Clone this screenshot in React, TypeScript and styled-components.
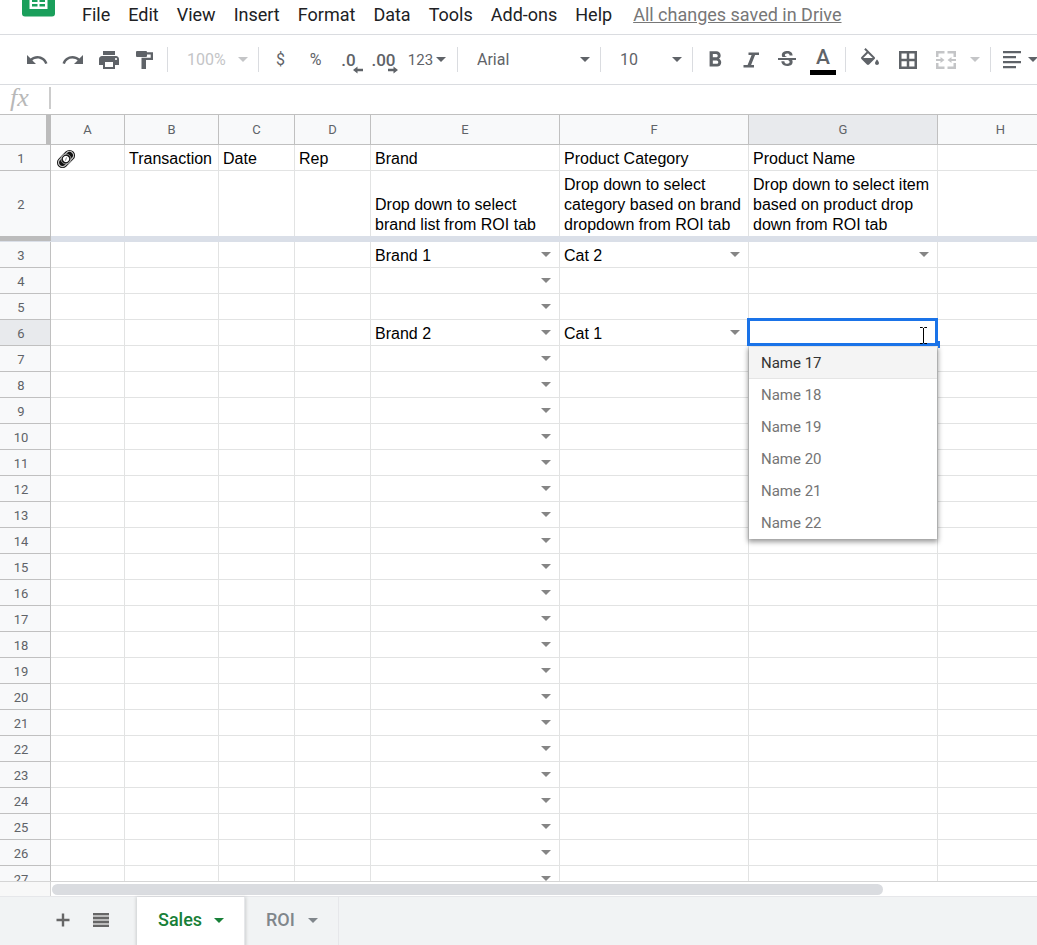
import React from 'react';
import styled, { createGlobalStyle, css } from 'styled-components';
import {
  MdUndo,
  MdRedo,
  MdPrint,
  MdFormatBold,
  MdStrikethroughS,
} from 'react-icons/md';

const GlobalStyle = createGlobalStyle`
  *, *::before, *::after { box-sizing: border-box; }
  body {
    margin: 0;
    background: #fff;
    font-family: Roboto, "Liberation Sans", sans-serif;
  }
  button, input, select {
    margin: 0;
    padding: 0;
    border: 0;
    outline: 0;
    background: transparent;
    color: inherit;
    font: inherit;
  }
  svg { display: block; flex: none; }
`;

const Page = styled.div`
  display: flex;
  flex-direction: column;
  height: 100vh;
  overflow: hidden;
`;

/* ---------- menu bar ---------- */

const MenuBar = styled.header`
  display: flex;
  flex: none;
  height: 35px;
  padding-left: 22px;
  border-bottom: 1px solid #dadce0;
  white-space: nowrap;
`;

const Logo = styled.div`
  width: 33px;
  height: 17px;
  margin-right: 18px;
`;

const Menus = styled.nav`
  display: flex;
  height: 30px;
  align-items: center;
  font-size: 18px;
  line-height: 24px;
  color: #202124;
`;

const MenuButton = styled.button`
  padding: 0 9px;
`;

const SavedLink = styled.a`
  margin-left: 12px;
  color: #777;
  text-decoration: underline;
`;

/* ---------- toolbar ---------- */

const Toolbar = styled.div`
  display: flex;
  flex: none;
  align-items: center;
  height: 50px;
  padding-left: 19px;
  border-bottom: 1px solid #dadce0;
  color: #5f6368;
  font-size: 16px;
  overflow: hidden;
`;

const Group = styled.div<{ $gap?: number }>`
  display: flex;
  flex: none;
  align-items: center;
  gap: ${(p) => p.$gap ?? 0}px;
  padding: 0 ${(p) => p.$gap ?? 0}px;
`;

const Separator = styled.span`
  flex: none;
  width: 1px;
  height: 25px;
  margin: 0 4px;
  background: #dadce0;
`;

const ToolButton = styled.button<{ $width?: number; $disabled?: boolean }>`
  display: flex;
  flex: none;
  align-items: center;
  justify-content: center;
  width: ${(p) => p.$width ?? 36}px;
  height: 36px;
  color: ${(p) => (p.$disabled ? '#c4c5c7' : 'inherit')};
`;

const DecimalButton = styled(ToolButton)`
  position: relative;
  padding-right: 4px;
  font-size: 17px;
  font-weight: 500;
  svg {
    position: absolute;
    right: 5px;
    bottom: 4px;
  }
`;

const FormatButton = styled(ToolButton)`
  gap: 3px;
  padding-right: 2px;
  font-size: 15px;
`;

const ColorButton = styled(ToolButton)`
  span {
    width: 26px;
    height: 29px;
    border-bottom: 5px solid #000;
    margin-top: 2px;
    font-size: 21px;
    font-weight: 500;
    line-height: 22px;
  }
`;

const AlignButton = styled(ToolButton)`
  gap: 4px;
`;

const Picker = styled.label<{ $width: number; $muted?: boolean }>`
  display: flex;
  flex: none;
  align-items: center;
  width: ${(p) => p.$width}px;
  height: 36px;
  padding: 0 6px 0 15px;
  color: ${(p) => (p.$muted ? '#c4c5c7' : 'inherit')};
  select {
    flex: 1;
    min-width: 0;
    appearance: none;
  }
`;

/* ---------- formula bar ---------- */

const FormulaBar = styled.label`
  display: flex;
  flex: none;
  align-items: center;
  height: 30px;
  padding: 0 0 3px 10px;
  border-bottom: 1px solid #c0c0c0;
  span {
    width: 39px;
    color: #b8b8b8;
    font: italic 26px/26px "Liberation Serif", serif;
  }
  input {
    flex: 1;
    height: 22px;
    padding: 0 8px;
    border-left: 2px solid #ccc;
    font-size: 16px;
  }
`;

/* ---------- sheet ---------- */

const SheetArea = styled.main`
  flex: 1;
  min-height: 0;
  overflow: hidden;
`;

const Grid = styled.table`
  width: 1064px;
  table-layout: fixed;
  border-collapse: separate;
  border-spacing: 0;
`;

const headCell = css<{ $active?: boolean }>`
  padding: 0;
  border: solid #c0c0c0;
  border-width: 0 1px 1px 0;
  background: ${(p) => (p.$active ? '#e8eaed' : '#f8f9fa')};
  color: #5f6368;
  font-size: 13px;
  font-weight: 400;
  line-height: 16px;
  text-align: center;
`;

const ColumnHead = styled.th<{ $active?: boolean }>`
  ${headCell}
  height: 30px;
`;

const Corner = styled.td`
  ${headCell}
  border-right: 5px solid #bcbcbc;
`;

const RowHead = styled.th<{ $active?: boolean; $frozenEdge?: boolean }>`
  ${headCell}
  padding: 2px 8px 0 0;
  border-bottom-width: ${(p) => (p.$frozenEdge ? 0 : 1)}px;
`;

const Row = styled.tr<{ $height?: number }>`
  height: ${(p) => p.$height ?? 26}px;
`;

const Cell = styled.td<{ $frozenEdge?: boolean }>`
  position: relative;
  padding: 0 0 1px 4px;
  border: solid #e2e3e3;
  border-width: 0 1px ${(p) => (p.$frozenEdge ? 0 : 1)}px 0;
  vertical-align: bottom;
  font: 16px/20px "Liberation Sans", Arial, sans-serif;
  color: #000;
`;

const CellBody = styled.div`
  display: flex;
  align-items: center;
  justify-content: space-between;
  height: 20px;
`;

const CellToggle = styled.button`
  display: flex;
  align-items: center;
  height: 16px;
  margin-bottom: 4px;
  padding: 0 8px;
  color: #858585;
`;

const FreezeHead = styled.td`
  height: 6px;
  padding: 0;
  border-bottom: 1px solid #dadfe8;
  background: #bcbcbc;
`;

const FreezeBar = styled.td`
  height: 6px;
  padding: 0;
  background: #dadfe8;
`;

const Selection = styled.div`
  position: absolute;
  z-index: 2;
  inset: -2px -1px -1px -2px;
  border: 3px solid #1a73e8;
  background: #fff;
  &::after {
    content: "";
    position: absolute;
    right: -5px;
    bottom: -5px;
    width: 2px;
    height: 7px;
    background: #1a73e8;
  }
`;

const CellInput = styled.input`
  display: block;
  width: 100%;
  height: 100%;
`;

const PointerMark = styled.svg`
  position: absolute;
  top: 6px;
  right: 7px;
`;

const Options = styled.ul`
  position: absolute;
  z-index: 1;
  top: 27px;
  left: 0;
  right: 0;
  margin: 0;
  padding: 0;
  list-style: none;
  background: #fff;
  box-shadow: 0 2px 5px 1px rgba(0, 0, 0, 0.4);
`;

const Option = styled.li<{ $active?: boolean }>`
  height: 32px;
  padding-left: 12px;
  border-bottom: 1px solid ${(p) => (p.$active ? '#e5e5e5' : 'transparent')};
  background: ${(p) => (p.$active ? '#f4f4f4' : '#fff')};
  color: ${(p) => (p.$active ? '#333' : '#757575')};
  font: 15px/32px Roboto, sans-serif;
`;

/* ---------- scrollbar and tabs ---------- */

const ScrollRow = styled.div`
  display: flex;
  flex: none;
  height: 15px;
  border-top: 1px solid #d5d5d5;
`;

const ScrollCorner = styled.div`
  width: 51px;
  border-right: 1px solid #d5d5d5;
  background: #f8f8f8;
`;

const ScrollThumb = styled.div`
  flex: 1;
  height: 11px;
  margin: 2px 154px 0 1px;
  border-radius: 6px;
  background: #dadce0;
`;

const TabBar = styled.footer`
  display: flex;
  flex: none;
  height: 49px;
  padding-left: 45px;
  border-top: 1px solid #e6e7ea;
  background: #f1f3f4;
  color: #666;
`;

const TabTool = styled.button`
  display: flex;
  align-items: center;
  justify-content: center;
  width: 36px;
  margin-right: 2px;
  padding-bottom: 2px;
`;

const Tab = styled.button<{ $active?: boolean }>`
  display: flex;
  align-items: center;
  justify-content: space-between;
  width: ${(p) => (p.$active ? 108 : 94)}px;
  margin-left: ${(p) => (p.$active ? 16 : 0)}px;
  padding: 0 20px 2px 21px;
  border-right: 1px solid #e6e7ea;
  background: ${(p) => (p.$active ? '#fff' : 'transparent')};
  box-shadow: ${(p) => (p.$active ? '0 1px 3px 1px rgba(60, 64, 67, 0.2)' : 'none')};
  color: ${(p) => (p.$active ? '#188038' : '#80868b')};
  font-size: 18px;
  font-weight: 500;
  line-height: 24px;
`;

/* ---------- icons ---------- */

const Caret = () => (
  <svg width="10" height="5" viewBox="0 0 10 5" fill="currentColor" aria-hidden="true">
    <path d="M0 0h10L5 5z" />
  </svg>
);

const PaintIcon = () => (
  <svg width="24" height="24" viewBox="0 0 24 24" fill="currentColor">
    <path d="M4 3h9a1 1 0 0 1 1 1v4a1 1 0 0 1-1 1H4a1 1 0 0 1-1-1V4a1 1 0 0 1 1-1zM14 4.200h6V12h-7v9H8.500V9.700h9.200V6.500H14z" />
  </svg>
);

const ItalicIcon = () => (
  <svg width="24" height="24" viewBox="0 0 24 24" fill="currentColor">
    <path d="M9.500 4.500H20V7h-3.900l-4 10H15v2.500H4.500V17h4.100l4-10H9.500z" />
  </svg>
);

const FillIcon = () => (
  <svg width="24" height="24" viewBox="0 0 24 24" fill="currentColor">
    <path d="M16.560 8.940L7.620 0 6.210 1.410l2.380 2.380-5.150 5.150a1.490 1.490 0 0 0 0 2.120l5.500 5.500c.29.29.68.44 1.060.44s.77-.15 1.060-.44l5.500-5.500c.59-.58.59-1.530 0-2.120zM5.210 10L10 5.210 14.790 10H5.210zM19 11.500s-2 2.170-2 3.500c0 1.100.9 2 2 2s2-.9 2-2c0-1.330-2-3.500-2-3.500z" />
  </svg>
);

const BordersIcon = () => (
  <svg width="24" height="24" viewBox="0 0 24 24" fill="currentColor" fillRule="evenodd">
    <path d="M3 3h18v18H3zM5.500 5.500v5.250h5.250V5.500zM13.250 5.500v5.250h5.250V5.500zM5.500 13.250v5.250h5.250v-5.250zM13.250 13.250v5.250h5.250v-5.250z" />
  </svg>
);

const MergeIcon = () => (
  <svg width="24" height="24" viewBox="0 0 24 24" fill="currentColor">
    <path d="M2 3h8.500v2.500h-6V9H2zM22 3h-8.500v2.500h6V9H22zM2 21h8.500v-2.500h-6V15H2zM22 21h-8.500v-2.500h6V15H22z" />
    <path d="M2 11h4.500V9l4 3-4 3v-2H2zM22 11h-4.500V9l-4 3 4 3v-2H22z" />
  </svg>
);

const AlignLeftIcon = () => (
  <svg width="24" height="24" viewBox="0 0 24 24" fill="currentColor">
    <path d="M3 3h18v2.200H3zM3 8h13v2.200H3zM3 13h18v2.200H3zM3 18h13v2.200H3z" />
  </svg>
);

const ArrowMark = ({ right }: { right?: boolean }) => (
  <svg width="10" height="8" viewBox="0 0 10 8" fill="currentColor" aria-hidden="true">
    <path d={right ? 'M0 2.800h5.500V.5L10 4 5.500 7.500V5.200H0z' : 'M10 2.800H4.500V.5L0 4l4.500 3.500V5.200H10z'} />
  </svg>
);

const SheetsLogo = () => (
  <svg width="33" height="17" viewBox="0 0 33 17">
    <path d="M0 0h33v13.500a3 3 0 0 1-3 3H3a3 3 0 0 1-3-3z" fill="#1a9f5b" />
    <path d="M7.500 0h18v9h-18z" fill="#fff" />
    <path d="M10 0h5.500v2H10zM17.500 0H23v2h-5.500zM10 4h5.500v2.500H10zM17.500 4H23v2.500h-5.500z" fill="#1a9f5b" />
  </svg>
);

const LinkIcon = () => (
  <svg width="22" height="20" viewBox="0 0 22 20" role="img" aria-label="Link">
    <g transform="translate(1 1) rotate(-45 10 9)" fill="none">
      <rect x="-0.500" y="3.500" width="21" height="11" rx="5.500" fill="#111" />
      <rect x="1" y="5" width="18" height="8" rx="4" stroke="#c8c8c8" strokeWidth="1.200" />
      <circle cx="10" cy="9" r="3.600" fill="#fff" stroke="#111" strokeWidth="1" />
      <circle cx="10" cy="9" r="5" stroke="#aaa" strokeWidth="0.800" />
      <path d="M8.500 9.800l3-1.600" stroke="#777" strokeWidth="0.800" />
    </g>
  </svg>
);

/* ---------- data ---------- */

const menus = ['File', 'Edit', 'View', 'Insert', 'Format', 'Data', 'Tools', 'Add-ons', 'Help'];

const columns = [
  { id: 'A', width: 74 },
  { id: 'B', width: 94 },
  { id: 'C', width: 76 },
  { id: 'D', width: 76 },
  { id: 'E', width: 189 },
  { id: 'F', width: 189 },
  { id: 'G', width: 189 },
  { id: 'H', width: 126 },
];

const values: Record<string, React.ReactNode> = {
  A1: <LinkIcon />,
  B1: 'Transaction',
  C1: 'Date',
  D1: 'Rep',
  E1: 'Brand',
  F1: 'Product Category',
  G1: 'Product Name',
  E2: 'Drop down to select brand list from ROI tab',
  F2: 'Drop down to select category based on brand dropdown from ROI tab',
  G2: 'Drop down to select item based on product drop down from ROI tab',
  E3: 'Brand 1',
  F3: 'Cat 2',
  E6: 'Brand 2',
  F6: 'Cat 1',
};

const options = ['Name 17', 'Name 18', 'Name 19', 'Name 20', 'Name 21', 'Name 22'];

const hasToggle = (col: string, row: number) =>
  row > 2 && (col === 'E' || ['F3', 'G3', 'F6'].includes(col + row));

const ActiveCell = () => (
  <Cell>
    <Options role="listbox" aria-label="Product names">
      {options.map((name, i) => (
        <Option key={name} role="option" aria-selected={i === 0} $active={i === 0}>
          {name}
        </Option>
      ))}
    </Options>
    <Selection>
      <CellInput aria-label="G6" />
      <PointerMark width="9" height="17" viewBox="0 0 9 17" fill="none" stroke="#000">
        <path d="M1 .5h2.500l1 1 1-1H8M4.500 1v15M1 16.500h2.500l1-1 1 1H8" />
      </PointerMark>
    </Selection>
  </Cell>
);

const SheetRow = ({ row }: { row: number }) => (
  <Row $height={row === 2 ? 65 : 26}>
    <RowHead scope="row" $active={row === 6} $frozenEdge={row === 2}>
      {row}
    </RowHead>
    {columns.map(({ id }) =>
      id === 'G' && row === 6 ? (
        <ActiveCell key={id} />
      ) : (
        <Cell key={id} $frozenEdge={row === 2}>
          {hasToggle(id, row) ? (
            <CellBody>
              <span>{values[id + row]}</span>
              <CellToggle aria-label={`Open list for ${id}${row}`}>
                <Caret />
              </CellToggle>
            </CellBody>
          ) : (
            values[id + row]
          )}
        </Cell>
      ),
    )}
  </Row>
);

export default function App() {
  return (
    <Page>
      <GlobalStyle />
      <MenuBar>
        <Logo>
          <SheetsLogo />
        </Logo>
        <Menus>
          {menus.map((name) => (
            <MenuButton key={name}>{name}</MenuButton>
          ))}
          <SavedLink href="#">All changes saved in Drive</SavedLink>
        </Menus>
      </MenuBar>

      <Toolbar role="toolbar">
        <Group>
          <ToolButton aria-label="Undo"><MdUndo size={24} /></ToolButton>
          <ToolButton aria-label="Redo"><MdRedo size={24} /></ToolButton>
          <ToolButton aria-label="Print"><MdPrint size={24} /></ToolButton>
          <ToolButton aria-label="Paint format"><PaintIcon /></ToolButton>
        </Group>
        <Separator />
        <Picker $width={82} $muted>
          <select aria-label="Zoom"><option>100%</option></select>
          <Caret />
        </Picker>
        <Separator />
        <Group>
          <ToolButton $width={35}>$</ToolButton>
          <ToolButton $width={35}>%</ToolButton>
          <DecimalButton $width={35} aria-label="Decrease decimal places">.0<ArrowMark /></DecimalButton>
          <DecimalButton $width={35} aria-label="Increase decimal places">.00<ArrowMark right /></DecimalButton>
          <FormatButton $width={50}>123<Caret /></FormatButton>
        </Group>
        <Separator />
        <Picker $width={134}>
          <select aria-label="Font"><option>Arial</option></select>
          <Caret />
        </Picker>
        <Separator />
        <Picker $width={83}>
          <select aria-label="Font size"><option>10</option></select>
          <Caret />
        </Picker>
        <Separator />
        <Group>
          <ToolButton aria-label="Bold"><MdFormatBold size={26} /></ToolButton>
          <ToolButton aria-label="Italic"><ItalicIcon /></ToolButton>
          <ToolButton aria-label="Strikethrough"><MdStrikethroughS size={24} /></ToolButton>
          <ColorButton aria-label="Text color"><span>A</span></ColorButton>
        </Group>
        <Separator />
        <Group $gap={2}>
          <ToolButton aria-label="Fill color"><FillIcon /></ToolButton>
          <ToolButton aria-label="Borders"><BordersIcon /></ToolButton>
          <ToolButton aria-label="Merge cells" $disabled><MergeIcon /></ToolButton>
          <ToolButton aria-label="Merge type" $width={18} $disabled><Caret /></ToolButton>
        </Group>
        <Separator />
        <AlignButton aria-label="Horizontal align" $width={48}>
          <AlignLeftIcon />
          <Caret />
        </AlignButton>
      </Toolbar>

      <FormulaBar>
        <span>fx</span>
        <input aria-label="Formula" />
      </FormulaBar>

      <SheetArea>
        <Grid>
          <colgroup>
            <col style={{ width: 51 }} />
            {columns.map(({ id, width }) => (
              <col key={id} style={{ width }} />
            ))}
          </colgroup>
          <thead>
            <tr>
              <Corner />
              {columns.map(({ id }) => (
                <ColumnHead key={id} scope="col" $active={id === 'G'}>{id}</ColumnHead>
              ))}
            </tr>
          </thead>
          <tbody>
            <SheetRow row={1} />
            <SheetRow row={2} />
            <tr>
              <FreezeHead />
              <FreezeBar colSpan={columns.length} />
            </tr>
            {Array.from({ length: 25 }, (_, i) => (
              <SheetRow key={i} row={i + 3} />
            ))}
          </tbody>
        </Grid>
      </SheetArea>

      <ScrollRow>
        <ScrollCorner />
        <ScrollThumb />
      </ScrollRow>

      <TabBar>
        <TabTool aria-label="Add sheet">
          <svg width="14" height="14" viewBox="0 0 14 14" fill="currentColor">
            <path d="M5.800 0.500h2.400v5.300h5.300v2.400H8.200v5.300H5.800V8.200H0.500V5.800h5.300z" />
          </svg>
        </TabTool>
        <TabTool aria-label="All sheets">
          <svg width="16" height="14" viewBox="0 0 16 14" fill="currentColor">
            <path d="M0 0h16v14H0z" fill="#bbb" />
            <path d="M0 0h16v2H0zM0 4h16v2H0zM0 8h16v2H0zM0 12h16v2H0z" />
          </svg>
        </TabTool>
        <Tab $active>Sales<Caret /></Tab>
        <Tab>ROI<Caret /></Tab>
      </TabBar>
    </Page>
  );
}
